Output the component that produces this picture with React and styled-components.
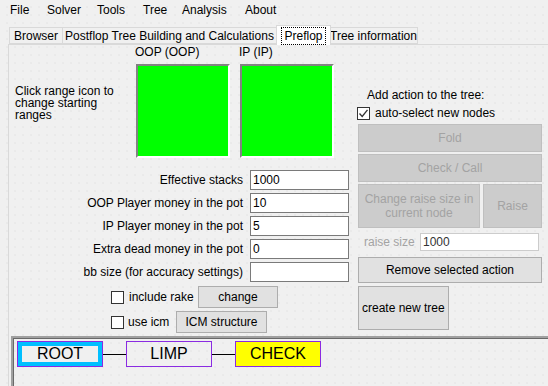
import React from "react";
import styled, { createGlobalStyle } from "styled-components";

const Global = createGlobalStyle`
  html, body { margin: 0; padding: 0; }
  body {
    width: 548px; height: 386px; overflow: hidden;
    background-color: #f0f0f0;
    background-image: radial-gradient(circle, #d6d6d6 0.55px, transparent 0.75px);
    background-size: 8px 8px;
    background-position: 3px 3px;
    font-family: "Liberation Sans", Arial, sans-serif;
    font-size: 12px;
    color: #000;
  }
  * { box-sizing: border-box; }
`;

const Window = styled.div`
  display: flex; flex-direction: column; width: 548px; height: 386px;
`;

const MenuBar = styled.div`
  display: flex; height: 20px; padding-left: 10px; align-items: center;
`;
const MenuItem = styled.div`
  width: ${(p) => (p.$w ? `${p.$w}px` : "auto")}; line-height: 19px; white-space: nowrap;
`;

const TabStrip = styled.div`
  display: flex; align-items: flex-end; height: 24px; padding-left: 9px;
`;
const Tab = styled.div`
  width: ${(p) => p.$w}px; height: ${(p) => (p.$active ? 20 : 17)}px;
  margin-left: ${(p) => p.$ml || 0}px;
  margin-bottom: ${(p) => (p.$active ? -1 : 0)}px;
  border: 1px solid #d9d9d9; border-bottom: ${(p) => (p.$active ? "none" : "1px solid #d9d9d9")};
  background: ${(p) => (p.$active ? "#ffffff" : "#f0f0f0")};
  display: flex; align-items: center; justify-content: center;
  position: relative; z-index: ${(p) => (p.$active ? 2 : 1)};
  white-space: nowrap;
`;
const FocusText = styled.span`
  outline: 1px dotted #000; padding: 1px 2px; line-height: 14px;
`;

const TabPanel = styled.div`
  flex: 1; margin-left: 8px; border-top: 1px solid #d9d9d9; border-left: 1px solid #d9d9d9;
  display: flex; flex-direction: column; min-height: 0;
`;
const Content = styled.div`
  display: flex; height: 291px;
`;
const LeftCol = styled.div`
  width: 349px; display: flex; flex-direction: column;
`;
const RangeGrid = styled.div`
  display: grid; grid-template-columns: 111px 94px 94px; column-gap: 10px;
  grid-template-rows: 19px 94px; padding-left: 6px;
`;
const RangeLabel = styled.div`
  grid-row: 1; grid-column: ${(p) => p.$col}; line-height: 14px; margin-left: -1px;
`;
const Description = styled.div`
  grid-row: 2; grid-column: 1; line-height: 12px; padding-top: 21px;
`;
const RangeBox = styled.div`
  grid-row: 2; grid-column: ${(p) => p.$col}; width: 94px; height: 94px;
  background: #00ff00; cursor: pointer;
  border: 2px solid; border-color: #828282 #ffffff #ffffff #828282;
`;

const Form = styled.div`
  display: grid; grid-template-columns: 234px 99px; column-gap: 7px; row-gap: 3px;
  margin-top: 12px;
`;
const FieldLabel = styled.div`
  text-align: right; line-height: 20px; white-space: nowrap;
`;
const Input = styled.input`
  height: 20px; width: 100%; border: 1px solid #7a7a7a; background: #fff;
  font: inherit; padding: 0 2px; margin: 0; outline: none;
  &:disabled { border-color: #cccccc; color: #333; background: #fff; height: 18px; }
`;

const CheckRows = styled.div`
  display: flex; flex-direction: column; gap: 3px; margin-top: 4px; padding-left: 102px;
`;
const CheckRow = styled.div`
  display: flex; align-items: center; height: 22px;
`;
const Box = styled.span`
  width: 13px; height: 13px; border: 1px solid #333; background: #fff; flex: none;
  display: flex; align-items: center; justify-content: center;
`;
const CheckText = styled.span`
  width: ${(p) => p.$w}px; margin-left: ${(p) => p.$gap || 5}px; white-space: nowrap; flex: none;
`;
const Button = styled.button`
  width: ${(p) => (p.$w ? `${p.$w}px` : "100%")}; height: ${(p) => p.$h}px;
  margin: 0; padding: 0 2px; font: inherit; line-height: 14px;
  background: #e1e1e1; border: 1px solid #adadad; color: #000;
  text-align: ${(p) => (p.$left ? "left" : "center")};
  padding-left: ${(p) => (p.$left ? 3 : 2)}px;
  &:disabled { background: #cccccc; border-color: #bfbfbf; color: #a3a3a3; }
`;

const RightCol = styled.div`
  width: 184px; display: flex; flex-direction: column;
`;
const Heading = styled.div`
  margin-top: 43px; padding-left: 9px; line-height: 14px;
`;
const AutoRow = styled.div`
  display: flex; align-items: center; height: 14px; margin-top: 4px; margin-left: -1px;
`;
const Stack = styled.div`
  display: flex; flex-direction: column; gap: ${(p) => p.$gap}px; margin-top: ${(p) => p.$mt}px;
`;
const SplitRow = styled.div`
  display: flex; gap: 3px;
`;
const RaiseRow = styled.div`
  display: flex; align-items: center; height: 20px; margin-top: 4px; padding-left: 6px;
`;
const RaiseLabel = styled.span`
  color: #a3a3a3; width: 56px; flex: none;
`;
const RaiseInputWrap = styled.div`
  width: 119px; height: 18px; display: flex;
`;

const TreeArea = styled.div`
  flex: 1; margin-left: 2px; border-top: 2px solid #a0a0a0; border-left: 2px solid #a0a0a0;
  box-shadow: inset 1px 1px 0 #696969;
  padding: 3px 0 0 4px;
`;
const NodeRow = styled.div`
  display: flex; align-items: center;
`;
const Node = styled.div`
  width: 86px; height: 26px; border: 1px solid #8a2be2;
  background: ${(p) => p.$bg || "transparent"};
  box-shadow: ${(p) => (p.$selected ? "inset 0 0 0 4px #00bfff" : "none")};
  display: flex; align-items: center; justify-content: center;
  font-family: "Liberation Sans", Arial, sans-serif; font-size: 16px;
`;
const Connector = styled.div`
  width: 23px; height: 1px; background: #000;
`;

const Check = () => (
  <svg width="11" height="11" viewBox="0 0 11 11">
    <path d="M1.5 5.5 L4.2 8.5 L9.5 1.8" fill="none" stroke="#333" strokeWidth="1.3" />
  </svg>
);

const menus = [
  ["File", 37],
  ["Solver", 50],
  ["Tools", 46],
  ["Tree", 39],
  ["Analysis", 63],
  ["About", 0],
];

export default function App() {
  return (
    <>
      <Global />
      <Window>
        <MenuBar>
          {menus.map(([m, w]) => (
            <MenuItem key={m} $w={w}>{m}</MenuItem>
          ))}
        </MenuBar>
        <TabStrip>
          <Tab $w={54}>Browser</Tab>
          <Tab $w={215} $ml={-1}>Postflop Tree Building and Calculations</Tab>
          <Tab $w={55} $ml={-1} $active>
            <FocusText>Preflop</FocusText>
          </Tab>
          <Tab $w={89} $ml={-2}>Tree information</Tab>
        </TabStrip>
        <TabPanel>
          <Content>
            <LeftCol>
              <RangeGrid>
                <RangeLabel $col={2}>OOP (OOP)</RangeLabel>
                <RangeLabel $col={3}>IP (IP)</RangeLabel>
                <Description>Click range icon to change starting ranges</Description>
                <RangeBox $col={2} />
                <RangeBox $col={3} />
              </RangeGrid>
              <Form>
                <FieldLabel>Effective stacks</FieldLabel>
                <Input defaultValue="1000" />
                <FieldLabel>OOP Player money in the pot</FieldLabel>
                <Input defaultValue="10" />
                <FieldLabel>IP Player money in the pot</FieldLabel>
                <Input defaultValue="5" />
                <FieldLabel>Extra dead money in the pot</FieldLabel>
                <Input defaultValue="0" />
                <FieldLabel>bb size (for accuracy settings)</FieldLabel>
                <Input defaultValue="" />
              </Form>
              <CheckRows>
                <CheckRow>
                  <Box />
                  <CheckText $w={69}>include rake</CheckText>
                  <Button $w={80} $h={22}>change</Button>
                </CheckRow>
                <CheckRow>
                  <Box />
                  <CheckText $w={48} $gap={4}>use icm</CheckText>
                  <Button $w={91} $h={22}>ICM structure</Button>
                </CheckRow>
              </CheckRows>
            </LeftCol>
            <RightCol>
              <Heading>Add action to the tree:</Heading>
              <AutoRow>
                <Box><Check /></Box>
                <CheckText $w={160} $gap={5}>auto-select new nodes</CheckText>
              </AutoRow>
              <Stack $gap={2} $mt={4}>
                <Button $h={28} disabled>Fold</Button>
                <Button $h={28} disabled>Check / Call</Button>
                <SplitRow>
                  <Button $w={122} $h={44} disabled>Change raise size in current node</Button>
                  <Button $w={59} $h={44} disabled>Raise</Button>
                </SplitRow>
              </Stack>
              <RaiseRow>
                <RaiseLabel>raise size</RaiseLabel>
                <RaiseInputWrap>
                  <Input defaultValue="1000" disabled />
                </RaiseInputWrap>
              </RaiseRow>
              <Stack $gap={3} $mt={5}>
                <Button $h={26}>Remove selected action</Button>
                <Button $w={91} $h={44} $left>create new tree</Button>
              </Stack>
            </RightCol>
          </Content>
          <TreeArea>
            <NodeRow>
              <Node $selected $bg="#f0f0f0">ROOT</Node>
              <Connector />
              <Node>LIMP</Node>
              <Connector />
              <Node $bg="#ffff00">CHECK</Node>
            </NodeRow>
          </TreeArea>
        </TabPanel>
      </Window>
    </>
  );
}
